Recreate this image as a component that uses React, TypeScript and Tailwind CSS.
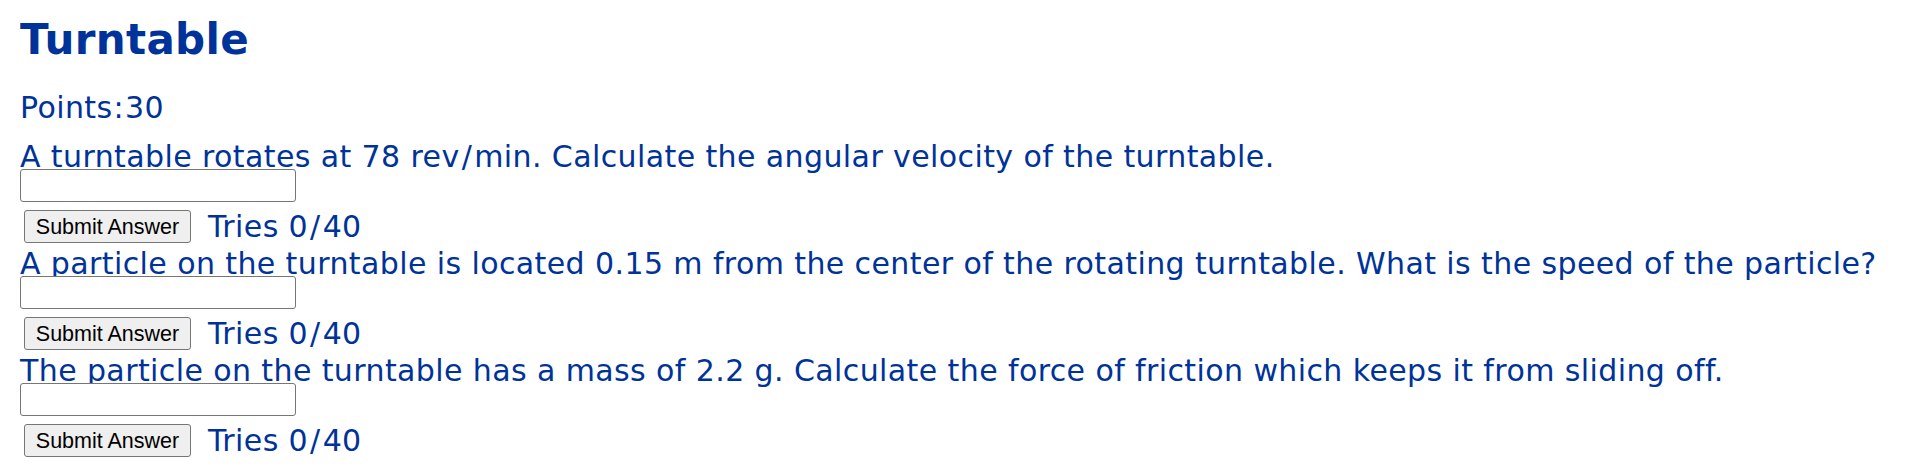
import React from "react";

const questions = [
  "A turntable rotates at 78 rev/min. Calculate the angular velocity of the turntable.",
  "A particle on the turntable is located 0.15 m from the center of the rotating turntable. What is the speed of the particle?",
  "The particle on the turntable has a mass of 2.2 g. Calculate the force of friction which keeps it from sliding off.",
];

function Wide({ children }: { children: React.ReactNode }) {
  return <span className="mx-[2px]">{children}</span>;
}

function Question({ text }: { text: string }) {
  const parts = text.split("/");
  return (
    <div className="whitespace-nowrap text-[30px] leading-[25px] tracking-[0.4px]">
      {parts.map((p, i) => (
        <React.Fragment key={i}>
          {i > 0 && <Wide>/</Wide>}
          {p}
        </React.Fragment>
      ))}
    </div>
  );
}

export default function App() {
  return (
    <div
      className="min-h-[467px] w-[1920px] bg-white pl-[20px] text-[#003399]"
      style={{ fontFamily: '"DejaVu Sans", Verdana, sans-serif' }}
    >
      <h1 className="pt-[15px] text-[42px] font-bold leading-[50px] tracking-[0.35px]">Turntable</h1>
      <div className="mt-[30px] text-[30px] leading-[25px] tracking-[0.4px]">
        Points<span className="mx-[1px]">:</span>30
      </div>
      <div className="mt-[24px] flex flex-col">
        {questions.map((q, i) => (
          <div key={i} className={i === 0 ? "flex flex-col" : "mt-[8px] flex flex-col"}>
            <Question text={q} />
            <input
              type="text"
              className="relative h-[33px] w-[276px] rounded-[3px] border border-[#767676] bg-white"
            />
            <div className="mt-[8px] flex items-center">
              <button
                className="ml-[4px] h-[33px] w-[167px] rounded-[3px] border border-[#767676] bg-[#efefef] text-[21.5px] text-black"
                style={{ fontFamily: '"Liberation Sans", Arial, sans-serif' }}
              >
                Submit Answer
              </button>
              <span className="ml-[17px] text-[30px] leading-[33px] tracking-[0.4px]">
                Tries 0<Wide>/</Wide>40
              </span>
            </div>
          </div>
        ))}
      </div>
    </div>
  );
}
